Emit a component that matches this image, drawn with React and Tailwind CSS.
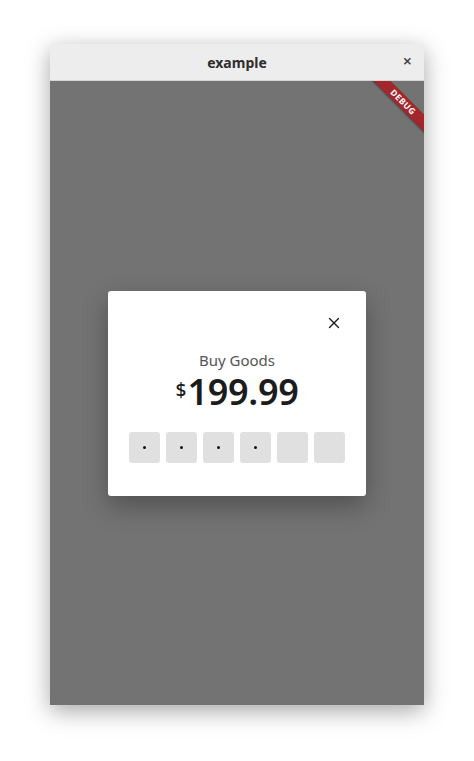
import { X } from 'lucide-react';

const digits = [true, true, true, true, false, false];

function DebugBanner() {
  return (
    <div className="absolute top-[15px] right-[-39px] w-[120px] h-[12px] rotate-45 bg-[#a3262a] flex items-center justify-center shadow-[0_1px_2px_rgba(0,0,0,0.4)]">
      <span className="text-white text-[8.5px] font-bold tracking-[0.5px] leading-none">DEBUG</span>
    </div>
  );
}

function PinBoxes() {
  return (
    <div className="flex gap-[6px] justify-center">
      {digits.map((filled, i) => (
        <div key={i} className="w-[31px] h-[31px] rounded-[3px] bg-[#e0e0e0] flex items-center justify-center">
          {filled && <div className="w-[3px] h-[3px] rounded-full bg-[#111]" />}
        </div>
      ))}
    </div>
  );
}

export default function App() {
  return (
    <div className="w-[474px] h-[761px] bg-white pl-[50px] pt-[44px]" style={{ fontFamily: '"Noto Sans", sans-serif' }}>
      <div className="w-[374px] h-[661px] flex flex-col shadow-[0_6px_22px_rgba(0,0,0,0.35)]">
        {/* title bar */}
        <div className="h-[37px] bg-[#ededed] border-b border-[#d6d6d6] relative flex items-center justify-center">
          <span className="text-[14px] font-bold text-[#2e2e2e] mt-[1px]">example</span>
          <span className="absolute right-[12px] top-[9px] text-[16px] font-semibold text-[#444] leading-none">×</span>
        </div>

        {/* content */}
        <div className="flex-1 bg-[#737373] relative overflow-hidden flex items-center justify-center">
          <DebugBanner />
          <div className="w-[258px] bg-white rounded-[3px] shadow-[0_10px_26px_rgba(0,0,0,0.3)] pt-[8px] pb-[33px] mt-[1px]">
            <div className="flex justify-end pr-[8px]">
              <div className="w-[48px] h-[48px] flex items-center justify-center">
                <X size={18} strokeWidth={1.8} className="text-[#1a1a1a]" />
              </div>
            </div>
            <div className="text-center text-[15px] text-[#555] leading-[20px] mt-[3px]">Buy Goods</div>
            <div className="flex justify-center items-start text-[#1c1c1c] h-[44px]">
              <span className="text-[19px] leading-[20px] mt-[10px] mr-[1px] font-medium">$</span>
              <span className="text-[36px] leading-[44px] font-semibold tracking-[-0.3px]">199.99</span>
            </div>
            <div className="mt-[18px]">
              <PinBoxes />
            </div>
          </div>
        </div>
      </div>
    </div>
  );
}
